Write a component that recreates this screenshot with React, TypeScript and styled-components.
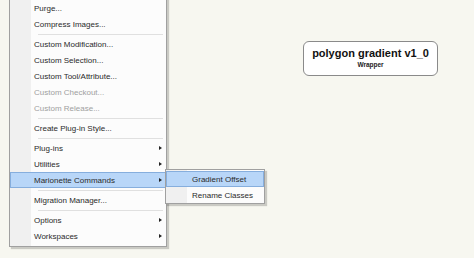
import React from 'react';
import styled, { createGlobalStyle } from 'styled-components';

const GlobalStyle = createGlobalStyle`
  html, body {
    margin: 0;
    padding: 0;
    background: #f7f7f0;
  }
  body {
    font-family: 'Liberation Sans', Arial, sans-serif;
  }
`;

type Entry =
  | { kind: 'item'; label: string; disabled?: boolean; arrow?: boolean; active?: boolean }
  | { kind: 'sep' };

const mainMenu: Entry[] = [
  { kind: 'item', label: 'Purge...' },
  { kind: 'item', label: 'Compress Images...' },
  { kind: 'sep' },
  { kind: 'item', label: 'Custom Modification...' },
  { kind: 'item', label: 'Custom Selection...' },
  { kind: 'item', label: 'Custom Tool/Attribute...' },
  { kind: 'item', label: 'Custom Checkout...', disabled: true },
  { kind: 'item', label: 'Custom Release...', disabled: true },
  { kind: 'sep' },
  { kind: 'item', label: 'Create Plug-in Style...' },
  { kind: 'sep' },
  { kind: 'item', label: 'Plug-ins', arrow: true },
  { kind: 'item', label: 'Utilities', arrow: true },
  { kind: 'item', label: 'Marionette Commands', arrow: true, active: true },
  { kind: 'sep' },
  { kind: 'item', label: 'Migration Manager...' },
  { kind: 'sep' },
  { kind: 'item', label: 'Options', arrow: true },
  { kind: 'item', label: 'Workspaces', arrow: true },
];

const subMenu: Entry[] = [
  { kind: 'item', label: 'Gradient Offset', active: true },
  { kind: 'item', label: 'Rename Classes' },
];

/**
 * Canvas with the context menu and its Marionette submenu open over a node.
 */
export default function App() {
  return (
    <>
      <GlobalStyle />
      <Canvas>
        <Node>
          <NodeTitle>polygon gradient v1_0</NodeTitle>
          <NodeKind>Wrapper</NodeKind>
        </Node>

        <Menu>
          {mainMenu.map((entry, i) =>
            entry.kind === 'sep' ? (
              <Separator key={i} />
            ) : (
              <Item key={i} $active={entry.active} $disabled={entry.disabled}>
                <Label>{entry.label}</Label>
                {entry.arrow && <Arrow />}
              </Item>
            )
          )}
        </Menu>

        <SubMenu>
          {subMenu.map((entry, i) =>
            entry.kind === 'sep' ? (
              <Separator key={i} />
            ) : (
              <SubItem key={i} $active={entry.active}>
                {entry.label}
              </SubItem>
            )
          )}
        </SubMenu>
      </Canvas>
    </>
  );
}

const Canvas = styled.div`
  position: relative;
  width: 474px;
  height: 258px;
  overflow: hidden;
  background: #f7f7f0;
`;

const Node = styled.div`
  position: absolute;
  left: 303px;
  top: 41px;
  width: 135px;
  height: 35px;
  box-sizing: border-box;
  border: 1px solid #8a8a8a;
  border-radius: 6px;
  background: #ffffff;
  display: flex;
  flex-direction: column;
  align-items: center;
  justify-content: center;
  gap: 2px;
  padding-bottom: 1px;
`;

const NodeTitle = styled.div`
  font-size: 11px;
  font-weight: bold;
  color: #111;
  line-height: 12px;
`;

const NodeKind = styled.div`
  font-size: 6.5px;
  font-weight: bold;
  color: #222;
  line-height: 8px;
`;

const Menu = styled.div`
  position: absolute;
  left: 9px;
  top: -4px;
  width: 158px;
  box-sizing: border-box;
  padding: 3px 0 2px 0;
  border: 1px solid #a0a0a0;
  background: linear-gradient(to right, #f0f0f0 0, #f0f0f0 21px, #fcfcfc 21px);
  box-shadow: 2px 2px 1px rgba(0, 0, 0, 0.18);
  display: flex;
  flex-direction: column;
`;

const Item = styled.div<{ $active?: boolean; $disabled?: boolean }>`
  height: 16px;
  box-sizing: border-box;
  display: flex;
  align-items: center;
  padding: 0 3px 0 23px;
  font-size: 8px;
  color: ${(p) => (p.$disabled ? '#a0a0a0' : '#2a2a2a')};
  background: ${(p) => (p.$active ? '#b8d6f8' : 'transparent')};
  border: 1px solid ${(p) => (p.$active ? '#86aedd' : 'transparent')};
`;

const Label = styled.span`
  flex: 1;
  white-space: nowrap;
`;

const Arrow = styled.span`
  width: 0;
  height: 0;
  border-left: 3px solid #222;
  border-top: 2.5px solid transparent;
  border-bottom: 2.5px solid transparent;
`;

const Separator = styled.div`
  height: 4px;
  margin: 0 3px 0 28px;
  display: flex;
  align-items: center;

  &::before {
    content: '';
    flex: 1;
    height: 1px;
    background: #e0e0e0;
  }
`;

const SubMenu = styled.div`
  position: absolute;
  left: 165px;
  top: 169px;
  width: 100px;
  box-sizing: border-box;
  padding: 1px 0 0 0;
  border: 1px solid #a0a0a0;
  background: linear-gradient(to right, #f0f0f0 0, #f0f0f0 21px, #fcfcfc 21px);
  box-shadow: 2px 2px 1px rgba(0, 0, 0, 0.18);
  display: flex;
  flex-direction: column;
`;

const SubItem = styled.div<{ $active?: boolean }>`
  height: 16px;
  box-sizing: border-box;
  display: flex;
  align-items: center;
  padding-left: 25px;
  font-size: 8px;
  color: #2a2a2a;
  white-space: nowrap;
  background: ${(p) => (p.$active ? '#b8d6f8' : 'transparent')};
  border: 1px solid ${(p) => (p.$active ? '#86aedd' : 'transparent')};
`;
